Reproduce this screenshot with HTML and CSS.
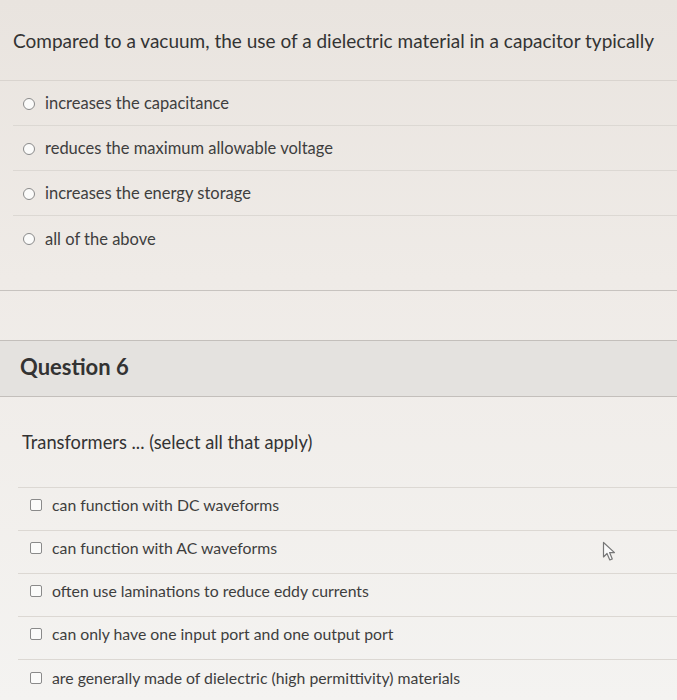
FILE: index.html
```html
<!DOCTYPE html>
<html lang="en">
<head>
    <meta charset="UTF-8">
    <meta name="viewport" content="width=device-width, initial-scale=1.0">
    <title>Quiz</title>
    <link rel="stylesheet" href="styles.css">
</head>
<body>

    <div class="question">
        <div class="question-text">
            Compared to a vacuum, the use of a dielectric material in a capacitor typically
        </div>
        <ul class="answers">
            <li><span class="radio"></span>increases the capacitance</li>
            <li><span class="radio"></span>reduces the maximum allowable voltage</li>
            <li><span class="radio"></span>increases the energy storage</li>
            <li><span class="radio"></span>all of the above</li>
        </ul>
    </div>

    <div class="question q6">
        <div class="header">
            <h2>Question 6</h2>
        </div>
        <div class="question-text small">
            Transformers ... (select all that apply)
        </div>
        <ul class="answers checks">
            <li><span class="box"></span>can function with DC waveforms</li>
            <li><span class="box"></span>can function with AC waveforms</li>
            <li><span class="box"></span>often use laminations to reduce eddy currents</li>
            <li><span class="box"></span>can only have one input port and one output port</li>
            <li><span class="box"></span>are generally made of dielectric (high permittivity) materials</li>
        </ul>

        <!-- mouse pointer -->
        <svg class="cursor" width="16" height="22" viewBox="0 0 16 22">
            <path d="M1.5 1.5 L1.5 16 L5 12.5 L7.8 19 L10.3 17.9 L7.6 11.6 L12.5 11.6 Z"
                  fill="#fafafa" stroke="#777" stroke-width="1.2" stroke-linejoin="round"/>
        </svg>
    </div>

</body>
</html>
```

FILE: styles.css
```css
* {
    box-sizing: border-box;
}

body {
    margin: 0;
    height: 700px;
    overflow: hidden;
    font-family: Lato, "Open Sans", Arial, sans-serif;
    color: #3b3b3b;
    background: linear-gradient(#e9e4df, #efebe7 40%, #f4f3f1);
}

.question {
    position: relative;
}

.question-text {
    padding: 0 13px;
    height: 81px;
    display: flex;
    align-items: center;
    font-size: 19px;
    color: #333;
    border-bottom: 1px solid #d9d4cf;
}

.question-text.small {
    padding: 0 22px;
    height: 90px;
    font-size: 18.3px;
    border-bottom: none;
}

.answers {
    list-style: none;
    margin: 0 0 0 13px;
    padding: 0 0 29px;
}

.answers li {
    height: 45px;
    display: flex;
    align-items: center;
    font-size: 16.5px;
    color: #3e3e3e;
    border-bottom: 1px solid #dcd8d3;
}

.answers li:last-child {
    border-bottom: none;
}

/* radio buttons */
.radio {
    width: 12px;
    height: 12px;
    border: 1.5px solid #8a8a8a;
    border-radius: 50%;
    margin: 1px 10px 0 10px;
    background: #fbfbfa;
}

/* bottom separator after first question */
.q6 {
    border-top: 1px solid #c7c3bf;
    padding-top: 49px;
}

.header {
    background: #e4e2df;
    border-top: 1px solid #c3bfbb;
    border-bottom: 1px solid #c3bfbb;
    height: 57px;
    display: flex;
    align-items: center;
    padding: 0 0 5px 20px;
}

.header h2 {
    margin: 0;
    font-size: 22px;
    font-weight: bold;
    color: #333;
}

.checks {
    margin-left: 18px;
    padding-bottom: 0;
    border-top: 1px solid #dcd8d3;
}

.checks li {
    height: 43px;
    font-size: 15.8px;
    padding-bottom: 9px;
}

/* check boxes */
.box {
    width: 12px;
    height: 12px;
    border: 1.5px solid #8a8a8a;
    border-radius: 2px;
    margin: 1px 10px 0 12px;
    background: #fbfbfa;
}

.cursor {
    position: absolute;
    left: 602px;
    top: 250px;
}
```
